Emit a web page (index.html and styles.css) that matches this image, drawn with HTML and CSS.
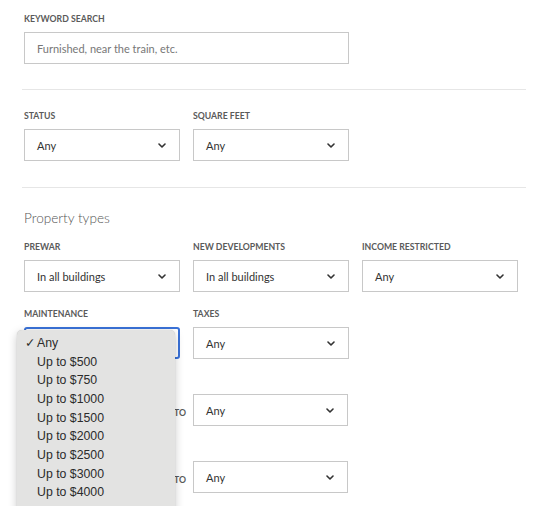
FILE: index.html
```html
<!DOCTYPE html>
<html>
<head>
<meta charset="utf-8">
<link rel="stylesheet" href="styles.css">
</head>
<body>
<div class="page">
  <div class="grid">
    <div class="field span2">
      <div class="label">Keyword search</div>
      <div class="control placeholder">Furnished, near the train, etc.</div>
    </div>
  </div>
  <hr class="divider">
  <div class="grid">
    <div class="field">
      <div class="label">Status</div>
      <div class="control select"><span>Any</span><svg class="chev" width="8" height="5" viewBox="0 0 8 5"><path d="M1 1l3 3 3-3" fill="none" stroke="#333" stroke-width="1.6" stroke-linecap="round" stroke-linejoin="round"/></svg></div>
    </div>
    <div class="field">
      <div class="label">Square feet</div>
      <div class="control select"><span>Any</span><svg class="chev" width="8" height="5" viewBox="0 0 8 5"><path d="M1 1l3 3 3-3" fill="none" stroke="#333" stroke-width="1.6" stroke-linecap="round" stroke-linejoin="round"/></svg></div>
    </div>
  </div>
  <hr class="divider second">
  <h2 class="heading">Property types</h2>
  <div class="grid rows">
    <div class="field">
      <div class="label">Prewar</div>
      <div class="control select"><span>In all buildings</span><svg class="chev" width="8" height="5" viewBox="0 0 8 5"><path d="M1 1l3 3 3-3" fill="none" stroke="#333" stroke-width="1.6" stroke-linecap="round" stroke-linejoin="round"/></svg></div>
    </div>
    <div class="field">
      <div class="label">New developments</div>
      <div class="control select"><span>In all buildings</span><svg class="chev" width="8" height="5" viewBox="0 0 8 5"><path d="M1 1l3 3 3-3" fill="none" stroke="#333" stroke-width="1.6" stroke-linecap="round" stroke-linejoin="round"/></svg></div>
    </div>
    <div class="field">
      <div class="label">Income restricted</div>
      <div class="control select"><span>Any</span><svg class="chev" width="8" height="5" viewBox="0 0 8 5"><path d="M1 1l3 3 3-3" fill="none" stroke="#333" stroke-width="1.6" stroke-linecap="round" stroke-linejoin="round"/></svg></div>
    </div>
    <div class="field">
      <div class="label">Maintenance</div>
      <div class="control select focused"><span>Any</span><svg class="chev" width="8" height="5" viewBox="0 0 8 5"><path d="M1 1l3 3 3-3" fill="none" stroke="#333" stroke-width="1.6" stroke-linecap="round" stroke-linejoin="round"/></svg></div>
    </div>
    <div class="field">
      <div class="label">Taxes</div>
      <div class="control select"><span>Any</span><svg class="chev" width="8" height="5" viewBox="0 0 8 5"><path d="M1 1l3 3 3-3" fill="none" stroke="#333" stroke-width="1.6" stroke-linecap="round" stroke-linejoin="round"/></svg></div>
    </div>
    <div class="field span2 first-col">
      <div class="label">Bedrooms</div>
      <div class="range">
        <div class="control select from"><span>Any</span><svg class="chev" width="8" height="5" viewBox="0 0 8 5"><path d="M1 1l3 3 3-3" fill="none" stroke="#333" stroke-width="1.6" stroke-linecap="round" stroke-linejoin="round"/></svg></div>
        <span class="to">To</span>
        <div class="control select upto"><span>Any</span><svg class="chev" width="8" height="5" viewBox="0 0 8 5"><path d="M1 1l3 3 3-3" fill="none" stroke="#333" stroke-width="1.6" stroke-linecap="round" stroke-linejoin="round"/></svg></div>
      </div>
    </div>
    <div class="field span2 first-col">
      <div class="label">Bathrooms</div>
      <div class="range">
        <div class="control select from"><span>Any</span><svg class="chev" width="8" height="5" viewBox="0 0 8 5"><path d="M1 1l3 3 3-3" fill="none" stroke="#333" stroke-width="1.6" stroke-linecap="round" stroke-linejoin="round"/></svg></div>
        <span class="to">To</span>
        <div class="control select upto"><span>Any</span><svg class="chev" width="8" height="5" viewBox="0 0 8 5"><path d="M1 1l3 3 3-3" fill="none" stroke="#333" stroke-width="1.6" stroke-linecap="round" stroke-linejoin="round"/></svg></div>
      </div>
    </div>
  </div>

  <ul class="menu">
    <li class="item checked">Any</li>
    <li class="item">Up to $500</li>
    <li class="item">Up to $750</li>
    <li class="item">Up to $1000</li>
    <li class="item">Up to $1500</li>
    <li class="item">Up to $2000</li>
    <li class="item">Up to $2500</li>
    <li class="item">Up to $3000</li>
    <li class="item">Up to $4000</li>
  </ul>
</div>
</body>
</html>
```
FILE: styles.css
```css
html, body {
  margin: 0;
  padding: 0;
  overflow: hidden;
  background: #fff;
}
body {
  font-family: Lato, "Liberation Sans", sans-serif;
  color: #333;
}
.page {
  position: relative;
  padding: 12px 21px 0 24px;
  width: 547px;
  height: 506px;
  box-sizing: border-box;
  overflow: hidden;
}
.grid {
  display: grid;
  grid-template-columns: repeat(3, 156px);
  column-gap: 13px;
}
.grid.rows {
  row-gap: 15px;
}
.span2 {
  grid-column: span 2;
}
.first-col {
  grid-column: 1 / span 2;
}
.label {
  height: 13px;
  line-height: 13px;
  margin-bottom: 7px;
  font-size: 8.7px;
  font-weight: 700;
  text-transform: uppercase;
  color: #5a5a5a;
}
.control {
  height: 32px;
  box-sizing: border-box;
  border: 1px solid #c8c8c8;
  display: flex;
  align-items: center;
  padding: 0 12px;
  font-size: 11px;
  color: #333;
  background: #fff;
}
.placeholder {
  color: #777;
}
.select {
  justify-content: space-between;
}
.chev {
  display: block;
  margin-right: 1px;
}
.focused {
  border: 2px solid #3a72d8;
  border-radius: 3px;
  padding: 0 11px;
}
.divider {
  border: 0;
  border-top: 1px solid #e6e6e6;
  margin: 25px 0 19px -2px;
  width: 504px;
}
.divider.second {
  margin-top: 26px;
  margin-bottom: 20px;
}
.heading {
  margin: 0 0 12px;
  font-size: 13.6px;
  line-height: 20px;
  font-weight: 300;
  color: #555;
}
.range {
  display: flex;
  align-items: center;
}
.from {
  width: 142px;
}
.to {
  margin: 4px 8px 0 8px;
  font-size: 8.7px;
  font-weight: 700;
  text-transform: uppercase;
  color: #5a5a5a;
  width: 11px;
}
.upto {
  width: 155px;
}
.menu {
  position: absolute;
  left: 17px;
  top: 330px;
  width: 158px;
  height: 200px;
  margin: 0;
  padding: 4px 0 0;
  box-sizing: border-box;
  list-style: none;
  background: #e3e3e2;
  border-radius: 5px;
  box-shadow: 0 3px 10px rgba(0, 0, 0, 0.22), 0 0 1px rgba(0, 0, 0, 0.25);
  font-family: "Liberation Sans", Arial, sans-serif;
  font-size: 12.3px;
  color: #2b2b2b;
}
.item {
  position: relative;
  height: 18.67px;
  line-height: 18.67px;
  padding-left: 20px;
}
.checked::before {
  content: "\2713";
  position: absolute;
  left: 8px;
  top: 0;
  font-family: "DejaVu Sans", sans-serif;
  font-size: 12.5px;
}
```
